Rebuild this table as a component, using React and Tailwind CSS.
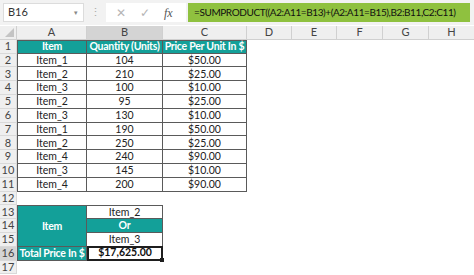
import React from "react";

const cols = ["A", "B", "C", "D", "E", "F", "G", "H"];

const data = [
  ["Item_1", "104", "$50.00"],
  ["Item_2", "210", "$25.00"],
  ["Item_3", "100", "$10.00"],
  ["Item_2", "95", "$25.00"],
  ["Item_3", "130", "$10.00"],
  ["Item_1", "190", "$50.00"],
  ["Item_2", "250", "$25.00"],
  ["Item_4", "240", "$90.00"],
  ["Item_3", "145", "$10.00"],
  ["Item_4", "200", "$90.00"],
];

const font = { fontFamily: "Lato, 'Liberation Sans', sans-serif" };

function RowNum({ n, active }) {
  return (
    <div
      className={`flex items-center justify-center border-b border-r border-[#d9d9d9] text-[11px] text-[#444] ${
        active ? "bg-[#d4d4d4]" : "bg-[#efefef]"
      }`}
    >
      {n}
    </div>
  );
}

function Cell({ children, className = "" }) {
  return (
    <div className={`flex items-center justify-center text-[10.5px] text-[#222] leading-none ${className}`}>
      {children}
    </div>
  );
}

function Empty({ n }) {
  return Array.from({ length: n }).map((_, i) => <div key={i} className="bg-white" />);
}

export default function App() {
  const teal = "bg-[#13a099] text-white font-bold tracking-[-0.25px] whitespace-nowrap";
  const line = "border-[#5a5a5a]";

  return (
    <div className="w-[474px] h-[275px] overflow-hidden bg-white" style={font}>
      {/* formula bar */}
      <div className="flex items-center h-[25px] bg-[#f2f2f2] pl-[3px] pr-[4px]">
        <div className="shrink-0 flex items-center justify-between w-[81px] h-[19px] bg-white border border-[#dcdcdc] pl-[4px] pr-[5px]">
          <span className="text-[11px] text-[#333]">B16</span>
          <span className="text-[7px] text-[#888]">▾</span>
        </div>
        <div className="shrink-0 w-[22px] flex justify-center text-[11px] text-[#aaa]">⋮</div>
        <div className="shrink-0 flex items-center h-[19px] w-[80px] bg-white pl-[10px] gap-[14px]">
          <span className="text-[12px] text-[#b5b5b5]">✕</span>
          <span className="text-[12px] text-[#b5b5b5]">✓</span>
          <span className="text-[12px] italic text-[#555]" style={{ fontFamily: "'Liberation Serif', serif" }}>
            fx
          </span>
        </div>
        <div className="ml-[2px] min-w-0 flex-1 overflow-hidden flex items-center h-[19px] bg-[#8fc13f] pl-[6px] text-[10px] tracking-[-0.4px] text-[#111] whitespace-nowrap">
          =SUMPRODUCT((A2:A11=B13)+(A2:A11=B15),B2:B11,C2:C11)
        </div>
      </div>

      {/* grid */}
      <div className="grid grid-cols-[17px_70px_76px_84px_45px_45px_46px_46px_46px] auto-rows-[13.8px] mt-px">
        {/* column headers */}
        <div className="relative bg-[#efefef] border-b border-r border-[#d0d0d0]">
          <div className="absolute right-[2px] bottom-[2px] w-0 h-0 border-l-[9px] border-l-transparent border-b-[9px] border-b-[#c4c4c4]" />
        </div>
        {cols.map((c) => (
          <div
            key={c}
            className={`flex items-center justify-center border-b border-r border-[#d0d0d0] text-[11px] text-[#444] ${
              c === "B" ? "bg-[#d4d4d4]" : "bg-[#efefef]"
            }`}
          >
            {c}
          </div>
        ))}

        {/* row 1 */}
        <RowNum n={1} />
        <Cell className={`${teal} border ${line}`}>Item</Cell>
        <Cell className={`${teal} border-y border-r ${line}`}>Quantity (Units)</Cell>
        <Cell className={`${teal} border-y border-r ${line}`}>Price Per Unit In $</Cell>
        <Empty n={5} />

        {data.map((r, i) => (
          <React.Fragment key={i}>
            <RowNum n={i + 2} />
            <Cell className={`border-x border-b ${line}`}>{r[0]}</Cell>
            <Cell className={`border-r border-b ${line}`}>{r[1]}</Cell>
            <Cell className={`border-r border-b ${line}`}>{r[2]}</Cell>
            <Empty n={5} />
          </React.Fragment>
        ))}

        {/* row 12 */}
        <RowNum n={12} />
        <Empty n={8} />

        {/* rows 13-15 */}
        <RowNum n={13} />
        <Cell className={`${teal} row-span-3 border ${line}`}>Item</Cell>
        <Cell className={`border-y border-r ${line}`}>Item_2</Cell>
        <Empty n={6} />
        <RowNum n={14} />
        <Cell className={`${teal} border-b border-r ${line}`}>Or</Cell>
        <Empty n={6} />
        <RowNum n={15} />
        <Cell className={`border-b border-r ${line}`}>Item_3</Cell>
        <Empty n={6} />

        {/* row 16 */}
        <RowNum n={16} active />
        <Cell className={`${teal} border-x border-b ${line}`}>Total Price In $</Cell>
        <div className="relative flex items-center justify-center border-2 border-[#1e1e1e] text-[10.5px] font-bold text-[#111] -mt-px">
          $17,625.00
          <div className="absolute -right-[3px] -bottom-[3px] w-[4px] h-[4px] bg-[#1e1e1e]" />
        </div>
        <Empty n={6} />

        <RowNum n={17} />
        <Empty n={8} />
      </div>
    </div>
  );
}
